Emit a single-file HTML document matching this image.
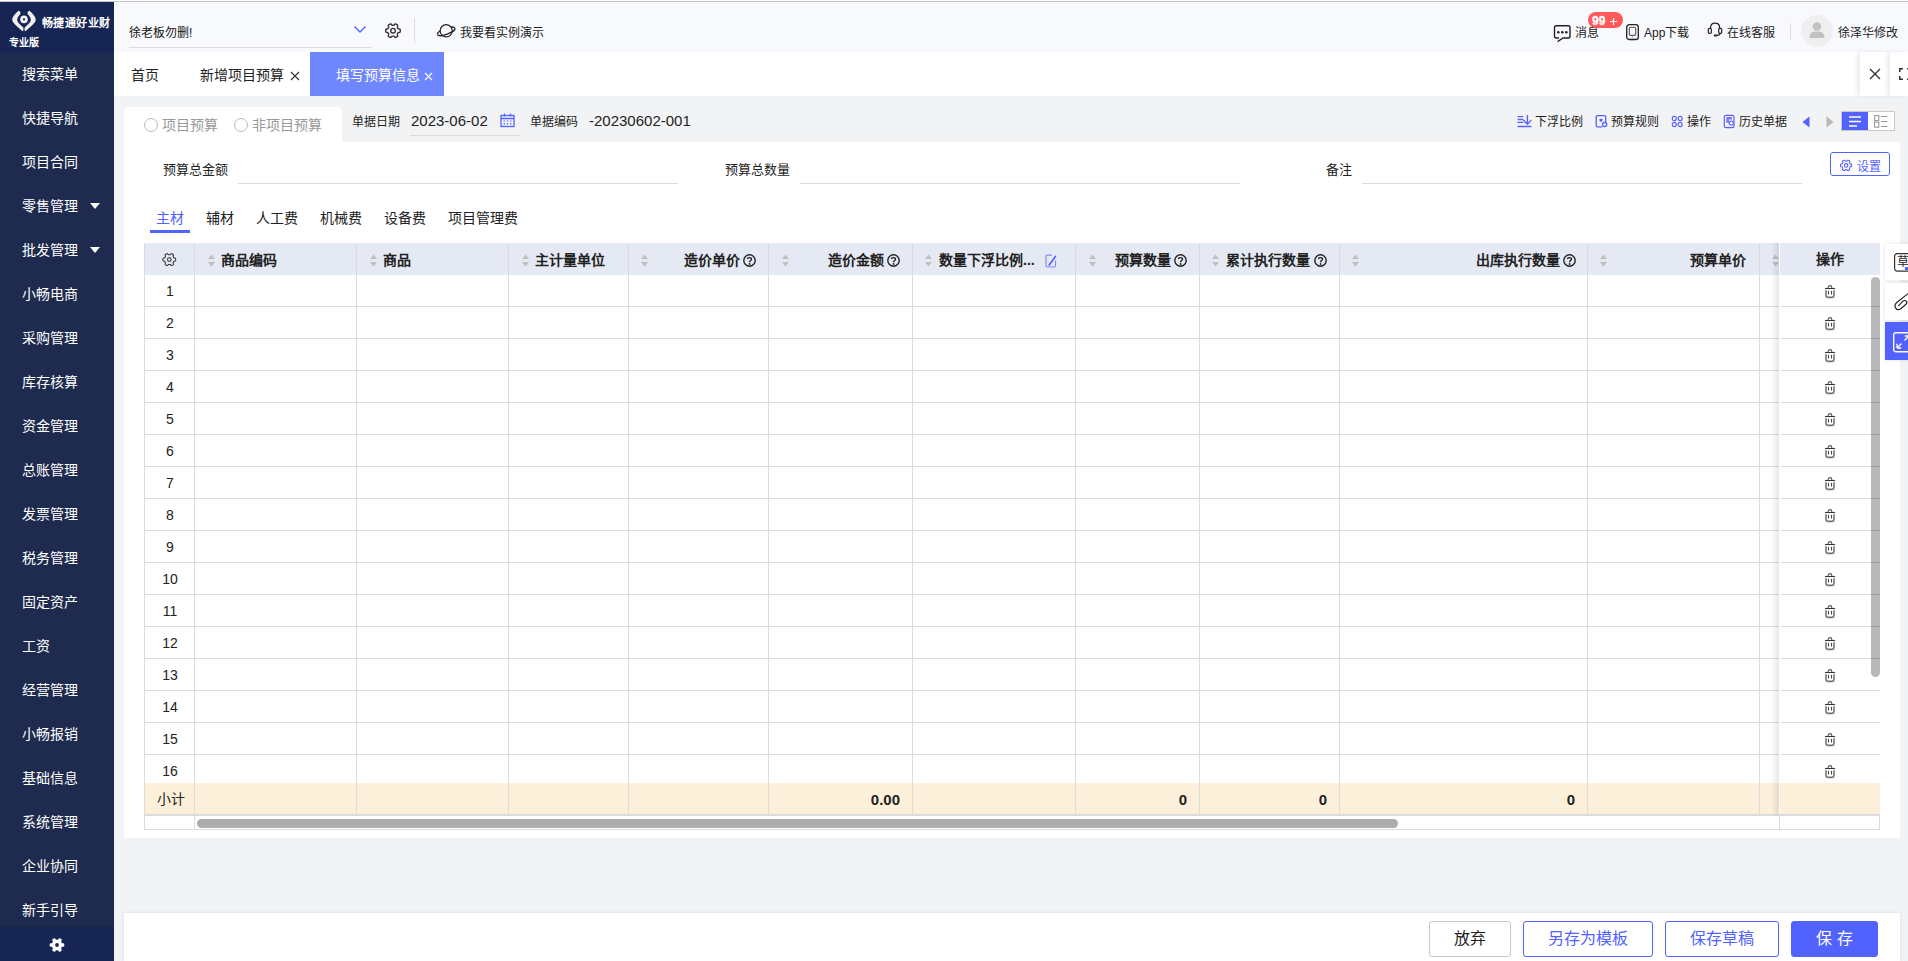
<!DOCTYPE html>
<html lang="zh-CN">
<head>
<meta charset="utf-8">
<style>
*{box-sizing:border-box;margin:0;padding:0}
html,body{width:1908px;height:961px;overflow:hidden}
body{position:relative;background:#f2f3f5;font-family:"Liberation Sans",sans-serif;color:#333;font-size:14px}
.a{position:absolute}
.t{position:absolute;white-space:nowrap;line-height:1}
svg{position:absolute;overflow:visible}
</style>
</head>
<body>
<div class="a" style="left:0px;top:0px;width:1908px;height:1px;background:#fff"></div>
<div class="a" style="left:0px;top:1px;width:1908px;height:1px;background:#c4c4c4"></div>
<div class="a" style="left:0px;top:2px;width:114px;height:959px;background:#1e2b4e"></div>
<div class="a" style="left:0px;top:2px;width:114px;height:50px;background:#162554"></div>
<div class="a" style="left:0px;top:927px;width:114px;height:34px;background:#162554"></div>
<svg style="left:0;top:0" width="60" height="40"><path d="M18.6 10.8 C15.5 13.5 12.3 16.5 12.3 19.8 C12.3 22.5 15 24.8 22.6 31.2 L23.4 30.6 L23.4 27.6 C19.8 24.4 17.2 22.2 17.2 19.8 C17.2 17.6 18.6 16 20.2 14.2 C21 13 20.2 11.2 18.6 10.8 Z" fill="#f0f0f0"/><path d="M29.4 10.8 C32.5 13.5 35.7 16.5 35.7 19.8 C35.7 22.5 33 24.8 25.4 31.2 L24.6 30.6 L24.6 27.6 C28.2 24.4 30.8 22.2 30.8 19.8 C30.8 17.6 29.4 16 27.8 14.2 C27 13 27.8 11.2 29.4 10.8 Z" fill="#f0f0f0"/><circle cx="24" cy="19.4" r="3.8" fill="#f0f0f0"/><circle cx="24" cy="19.4" r="1.1" fill="#162554"/></svg>
<div class="t" style="left:42px;top:16px;font-size:11px;color:#fff;line-height:15px;font-weight:bold;letter-spacing:0.4px">畅捷通好业财</div>
<div class="t" style="left:9px;top:36px;font-size:10px;color:#fff;line-height:14px;font-weight:bold">专业版</div>
<div class="t" style="left:22px;top:65px;font-size:14px;color:#fff;line-height:18px;">搜索菜单</div>
<div class="t" style="left:22px;top:109px;font-size:14px;color:#fff;line-height:18px;">快捷导航</div>
<div class="t" style="left:22px;top:153px;font-size:14px;color:#fff;line-height:18px;">项目合同</div>
<div class="t" style="left:22px;top:197px;font-size:14px;color:#fff;line-height:18px;">零售管理</div>
<div class="a" style="left:90px;top:203px;width:0;height:0;border-left:5px solid transparent;border-right:5px solid transparent;border-top:6px solid #fff"></div>
<div class="t" style="left:22px;top:241px;font-size:14px;color:#fff;line-height:18px;">批发管理</div>
<div class="a" style="left:90px;top:247px;width:0;height:0;border-left:5px solid transparent;border-right:5px solid transparent;border-top:6px solid #fff"></div>
<div class="t" style="left:22px;top:285px;font-size:14px;color:#fff;line-height:18px;">小畅电商</div>
<div class="t" style="left:22px;top:329px;font-size:14px;color:#fff;line-height:18px;">采购管理</div>
<div class="t" style="left:22px;top:373px;font-size:14px;color:#fff;line-height:18px;">库存核算</div>
<div class="t" style="left:22px;top:417px;font-size:14px;color:#fff;line-height:18px;">资金管理</div>
<div class="t" style="left:22px;top:461px;font-size:14px;color:#fff;line-height:18px;">总账管理</div>
<div class="t" style="left:22px;top:505px;font-size:14px;color:#fff;line-height:18px;">发票管理</div>
<div class="t" style="left:22px;top:549px;font-size:14px;color:#fff;line-height:18px;">税务管理</div>
<div class="t" style="left:22px;top:593px;font-size:14px;color:#fff;line-height:18px;">固定资产</div>
<div class="t" style="left:22px;top:637px;font-size:14px;color:#fff;line-height:18px;">工资</div>
<div class="t" style="left:22px;top:681px;font-size:14px;color:#fff;line-height:18px;">经营管理</div>
<div class="t" style="left:22px;top:725px;font-size:14px;color:#fff;line-height:18px;">小畅报销</div>
<div class="t" style="left:22px;top:769px;font-size:14px;color:#fff;line-height:18px;">基础信息</div>
<div class="t" style="left:22px;top:813px;font-size:14px;color:#fff;line-height:18px;">系统管理</div>
<div class="t" style="left:22px;top:857px;font-size:14px;color:#fff;line-height:18px;">企业协同</div>
<div class="t" style="left:22px;top:901px;font-size:14px;color:#fff;line-height:18px;">新手引导</div>
<svg style="left:0;top:0" width="1908" height="961"><path fill="#fff" d="M64.30 945.00 L64.30 945.19 L64.29 945.38 L64.28 945.57 L64.25 945.76 L64.22 945.95 L64.16 946.13 L64.07 946.31 L63.92 946.47 L63.66 946.60 L63.29 946.69 L62.85 946.73 L62.46 946.77 L62.18 946.83 L62.00 946.92 L61.88 947.02 L61.79 947.13 L61.72 947.25 L61.65 947.37 L61.58 947.49 L61.51 947.60 L61.44 947.72 L61.37 947.84 L61.31 947.96 L61.24 948.08 L61.19 948.22 L61.16 948.37 L61.18 948.57 L61.27 948.84 L61.43 949.20 L61.60 949.60 L61.72 949.97 L61.73 950.25 L61.67 950.47 L61.56 950.63 L61.43 950.77 L61.29 950.90 L61.13 951.02 L60.98 951.12 L60.81 951.22 L60.65 951.32 L60.48 951.42 L60.31 951.50 L60.14 951.59 L59.97 951.66 L59.78 951.72 L59.60 951.77 L59.40 951.78 L59.18 951.72 L58.95 951.57 L58.69 951.29 L58.42 950.93 L58.19 950.61 L58.00 950.40 L57.84 950.29 L57.69 950.24 L57.55 950.22 L57.41 950.21 L57.27 950.21 L57.14 950.21 L57.00 950.21 L56.86 950.21 L56.73 950.21 L56.59 950.21 L56.45 950.22 L56.31 950.24 L56.16 950.29 L56.00 950.40 L55.81 950.61 L55.58 950.93 L55.31 951.29 L55.05 951.57 L54.82 951.72 L54.60 951.78 L54.40 951.77 L54.22 951.72 L54.03 951.66 L53.86 951.59 L53.69 951.50 L53.52 951.42 L53.35 951.32 L53.19 951.22 L53.02 951.12 L52.87 951.02 L52.71 950.90 L52.57 950.77 L52.44 950.63 L52.33 950.47 L52.27 950.25 L52.28 949.97 L52.40 949.60 L52.57 949.20 L52.73 948.84 L52.82 948.57 L52.84 948.37 L52.81 948.22 L52.76 948.08 L52.69 947.96 L52.63 947.84 L52.56 947.72 L52.49 947.60 L52.42 947.49 L52.35 947.37 L52.28 947.25 L52.21 947.13 L52.12 947.02 L52.00 946.92 L51.82 946.83 L51.54 946.77 L51.15 946.73 L50.71 946.69 L50.34 946.60 L50.08 946.47 L49.93 946.31 L49.84 946.13 L49.78 945.95 L49.75 945.76 L49.72 945.57 L49.71 945.38 L49.70 945.19 L49.70 945.00 L49.70 944.81 L49.71 944.62 L49.72 944.43 L49.75 944.24 L49.78 944.05 L49.84 943.87 L49.93 943.69 L50.08 943.53 L50.34 943.40 L50.71 943.31 L51.15 943.27 L51.54 943.23 L51.82 943.17 L52.00 943.08 L52.12 942.98 L52.21 942.87 L52.28 942.75 L52.35 942.63 L52.42 942.51 L52.49 942.40 L52.56 942.28 L52.63 942.16 L52.69 942.04 L52.76 941.92 L52.81 941.78 L52.84 941.63 L52.82 941.43 L52.73 941.16 L52.57 940.80 L52.40 940.40 L52.28 940.03 L52.27 939.75 L52.33 939.53 L52.44 939.37 L52.57 939.23 L52.71 939.10 L52.87 938.98 L53.02 938.88 L53.19 938.78 L53.35 938.68 L53.52 938.58 L53.69 938.50 L53.86 938.41 L54.03 938.34 L54.22 938.28 L54.40 938.23 L54.60 938.22 L54.82 938.28 L55.05 938.43 L55.31 938.71 L55.58 939.07 L55.81 939.39 L56.00 939.60 L56.16 939.71 L56.31 939.76 L56.45 939.78 L56.59 939.79 L56.73 939.79 L56.86 939.79 L57.00 939.79 L57.14 939.79 L57.27 939.79 L57.41 939.79 L57.55 939.78 L57.69 939.76 L57.84 939.71 L58.00 939.60 L58.19 939.39 L58.42 939.07 L58.69 938.71 L58.95 938.43 L59.18 938.28 L59.40 938.22 L59.60 938.23 L59.78 938.28 L59.97 938.34 L60.14 938.41 L60.31 938.50 L60.48 938.58 L60.65 938.68 L60.81 938.78 L60.98 938.88 L61.13 938.98 L61.29 939.10 L61.43 939.23 L61.56 939.37 L61.67 939.53 L61.73 939.75 L61.72 940.03 L61.60 940.40 L61.43 940.80 L61.27 941.16 L61.18 941.43 L61.16 941.63 L61.19 941.78 L61.24 941.92 L61.31 942.04 L61.37 942.16 L61.44 942.28 L61.51 942.40 L61.58 942.51 L61.65 942.63 L61.72 942.75 L61.79 942.87 L61.88 942.98 L62.00 943.08 L62.18 943.17 L62.46 943.23 L62.85 943.27 L63.29 943.31 L63.66 943.40 L63.92 943.53 L64.07 943.69 L64.16 943.87 L64.22 944.05 L64.25 944.24 L64.28 944.43 L64.29 944.62 L64.30 944.81Z"/><circle cx="57" cy="945" r="1.9" fill="#162554"/></svg>
<div class="a" style="left:114px;top:2px;width:1794px;height:50px;background:#f7f9fc"></div>
<div class="a" style="left:114px;top:2px;width:1px;height:50px;background:#fff"></div>
<div class="t" style="left:129px;top:25px;font-size:12px;color:#111;line-height:16px;">徐老板勿删!</div>
<div class="a" style="left:129px;top:47px;width:243px;height:1px;background:#dcdcdc"></div>
<svg style="left:354px;top:26px" width="12" height="7" viewBox="0 0 12 7"><path d="M0.5 0.5 L6 6 L11.5 0.5" fill="none" stroke="#5262ff" stroke-width="1.4"/></svg>
<svg style="left:0;top:0" width="1908" height="961"><path fill="none" stroke="#333" stroke-width="1.4" d="M400.30 30.70 L400.30 30.89 L400.29 31.08 L400.28 31.27 L400.25 31.46 L400.22 31.65 L400.16 31.83 L400.08 32.01 L399.94 32.17 L399.70 32.31 L399.36 32.40 L398.96 32.47 L398.60 32.52 L398.34 32.59 L398.17 32.69 L398.06 32.80 L397.97 32.91 L397.90 33.03 L397.82 33.16 L397.75 33.28 L397.68 33.40 L397.61 33.53 L397.54 33.65 L397.47 33.77 L397.40 33.90 L397.34 34.03 L397.31 34.19 L397.31 34.38 L397.38 34.64 L397.51 34.98 L397.66 35.36 L397.75 35.70 L397.75 35.97 L397.68 36.17 L397.56 36.34 L397.43 36.48 L397.29 36.60 L397.13 36.72 L396.98 36.82 L396.81 36.92 L396.65 37.02 L396.48 37.12 L396.31 37.20 L396.14 37.29 L395.97 37.36 L395.79 37.43 L395.60 37.47 L395.40 37.49 L395.19 37.45 L394.96 37.31 L394.70 37.06 L394.45 36.74 L394.22 36.46 L394.03 36.27 L393.87 36.17 L393.71 36.13 L393.57 36.11 L393.43 36.11 L393.28 36.11 L393.14 36.11 L393.00 36.11 L392.86 36.11 L392.72 36.11 L392.57 36.11 L392.43 36.11 L392.29 36.13 L392.13 36.17 L391.97 36.27 L391.78 36.46 L391.55 36.74 L391.30 37.06 L391.04 37.31 L390.81 37.45 L390.60 37.49 L390.40 37.47 L390.21 37.43 L390.03 37.36 L389.86 37.29 L389.69 37.20 L389.52 37.12 L389.35 37.02 L389.19 36.92 L389.02 36.82 L388.87 36.72 L388.71 36.60 L388.57 36.48 L388.44 36.34 L388.32 36.17 L388.25 35.97 L388.25 35.70 L388.34 35.36 L388.49 34.98 L388.62 34.64 L388.69 34.38 L388.69 34.19 L388.66 34.03 L388.60 33.90 L388.53 33.77 L388.46 33.65 L388.39 33.53 L388.32 33.40 L388.25 33.28 L388.18 33.16 L388.10 33.03 L388.03 32.91 L387.94 32.80 L387.83 32.69 L387.66 32.59 L387.40 32.52 L387.04 32.47 L386.64 32.40 L386.30 32.31 L386.06 32.17 L385.92 32.01 L385.84 31.83 L385.78 31.65 L385.75 31.46 L385.72 31.27 L385.71 31.08 L385.70 30.89 L385.70 30.70 L385.70 30.51 L385.71 30.32 L385.72 30.13 L385.75 29.94 L385.78 29.75 L385.84 29.57 L385.92 29.39 L386.06 29.23 L386.30 29.09 L386.64 29.00 L387.04 28.93 L387.40 28.88 L387.66 28.81 L387.83 28.71 L387.94 28.60 L388.03 28.49 L388.10 28.37 L388.18 28.24 L388.25 28.12 L388.32 28.00 L388.39 27.87 L388.46 27.75 L388.53 27.63 L388.60 27.50 L388.66 27.37 L388.69 27.21 L388.69 27.02 L388.62 26.76 L388.49 26.42 L388.34 26.04 L388.25 25.70 L388.25 25.43 L388.32 25.23 L388.44 25.06 L388.57 24.92 L388.71 24.80 L388.87 24.68 L389.02 24.58 L389.19 24.48 L389.35 24.38 L389.52 24.28 L389.69 24.20 L389.86 24.11 L390.03 24.04 L390.21 23.97 L390.40 23.93 L390.60 23.91 L390.81 23.95 L391.04 24.09 L391.30 24.34 L391.55 24.66 L391.78 24.94 L391.97 25.13 L392.13 25.23 L392.29 25.27 L392.43 25.29 L392.57 25.29 L392.72 25.29 L392.86 25.29 L393.00 25.29 L393.14 25.29 L393.28 25.29 L393.43 25.29 L393.57 25.29 L393.71 25.27 L393.87 25.23 L394.03 25.13 L394.22 24.94 L394.45 24.66 L394.70 24.34 L394.96 24.09 L395.19 23.95 L395.40 23.91 L395.60 23.93 L395.79 23.97 L395.97 24.04 L396.14 24.11 L396.31 24.20 L396.48 24.28 L396.65 24.38 L396.81 24.48 L396.98 24.58 L397.13 24.68 L397.29 24.80 L397.43 24.92 L397.56 25.06 L397.68 25.23 L397.75 25.43 L397.75 25.70 L397.66 26.04 L397.51 26.42 L397.38 26.76 L397.31 27.02 L397.31 27.21 L397.34 27.37 L397.40 27.50 L397.47 27.63 L397.54 27.75 L397.61 27.87 L397.68 28.00 L397.75 28.12 L397.82 28.24 L397.90 28.37 L397.97 28.49 L398.06 28.60 L398.17 28.71 L398.34 28.81 L398.60 28.88 L398.96 28.93 L399.36 29.00 L399.70 29.09 L399.94 29.23 L400.08 29.39 L400.16 29.57 L400.22 29.75 L400.25 29.94 L400.28 30.13 L400.29 30.32 L400.30 30.51Z"/><circle cx="393" cy="30.7" r="2.3" fill="none" stroke="#333" stroke-width="1.4"/></svg>
<div class="a" style="left:414px;top:18px;width:1px;height:25px;background:#dcdcdc"></div>
<svg style="left:430px;top:18px" width="30" height="26"><g transform="translate(16.2 13.3) rotate(-20)"><path d="M-9.3 0 A9.3 3 0 0 1 9.3 0" fill="none" stroke="#222" stroke-width="1.2"/></g><circle cx="16.2" cy="12.8" r="6.1" fill="#f7f9fc" stroke="#222" stroke-width="1.2"/><g transform="translate(16.2 13.3) rotate(-20)"><path d="M-9.3 0 A9.3 3 0 0 0 9.3 0" fill="none" stroke="#222" stroke-width="1.2"/></g></svg>
<div class="t" style="left:460px;top:25px;font-size:12px;color:#222;line-height:16px;">我要看实例演示</div>
<svg style="left:1553px;top:24px" width="19" height="19" viewBox="0 0 19 19"><path d="M6 14 H3.3 Q1.5 14 1.5 12.2 V3.6 Q1.5 1.8 3.3 1.8 H15.2 Q17 1.8 17 3.6 V12.2 Q17 14 15.2 14 H10 L4.6 17.6" fill="none" stroke="#222" stroke-width="1.4" stroke-linejoin="round"/><circle cx="5.3" cy="8.3" r="1.3" fill="#222"/><circle cx="9.3" cy="8.3" r="1.3" fill="#222"/><circle cx="13.3" cy="8.3" r="1.3" fill="#222"/></svg>
<div class="t" style="left:1575px;top:25px;font-size:12px;color:#222;line-height:16px;">消息</div>
<div class="a" style="left:1588px;top:12px;width:35px;height:16px;border-radius:8px;background:#ff5959"></div>
<div class="t" style="left:1592px;top:13px;font-size:12px;color:#fff;line-height:16px;font-weight:bold;line-height:17px;-webkit-text-stroke:0.3px #fff">99</div>
<svg style="left:1610px;top:18px" width="7" height="7" viewBox="0 0 7 7"><path d="M0 3.5 H7 M3.5 0 V7" stroke="#fff" stroke-width="1.2"/></svg>
<svg style="left:1626px;top:24px" width="13" height="16" viewBox="0 0 13 16"><rect x="0.7" y="0.7" width="11.6" height="14.8" rx="2.6" fill="none" stroke="#222" stroke-width="1.3"/><rect x="3.3" y="3.2" width="6.4" height="8.2" rx="1.3" fill="none" stroke="#555" stroke-width="1.1"/><path d="M6.5 11.6 V13.6" stroke="#aaa" stroke-width="1.3"/></svg>
<div class="t" style="left:1644px;top:25px;font-size:12px;color:#222;line-height:16px;">App下载</div>
<svg style="left:1707px;top:22px" width="16" height="16" viewBox="0 0 16 16"><path d="M3.6 6.3 V5.6 Q3.6 1.2 8.1 1.2 Q12.6 1.2 12.6 5.6 V6.3" fill="none" stroke="#222" stroke-width="1.2"/><rect x="1.3" y="6.3" width="3" height="5" rx="1" fill="none" stroke="#222" stroke-width="1.2"/><rect x="11.7" y="6.3" width="3" height="5" rx="1" fill="none" stroke="#222" stroke-width="1.2"/><path d="M13 11.3 Q13 13.4 10 13.4" fill="none" stroke="#222" stroke-width="1.2"/><rect x="6.8" y="12.5" width="3.4" height="1.9" rx="0.9" fill="#222"/></svg>
<div class="t" style="left:1727px;top:25px;font-size:12px;color:#222;line-height:16px;">在线客服</div>
<div class="a" style="left:1790px;top:23px;width:1px;height:16px;background:#dcdcdc"></div>
<div class="a" style="left:1801px;top:15px;width:32px;height:32px;border-radius:50%;background:#efefef"></div>
<svg style="left:1809px;top:21px" width="16" height="18" viewBox="0 0 16 18"><circle cx="8" cy="5.5" r="4.2" fill="#c2c2c2"/><path d="M0.5 17 C0.5 11.5 3.5 10.5 8 10.5 C12.5 10.5 15.5 11.5 15.5 17 Z" fill="#c2c2c2"/></svg>
<div class="t" style="left:1838px;top:25px;font-size:12px;color:#222;line-height:16px;">徐泽华修改</div>
<div class="a" style="left:114px;top:52px;width:1794px;height:44px;background:#fff"></div>
<div class="t" style="left:131px;top:66px;font-size:14px;color:#222;line-height:18px;">首页</div>
<div class="t" style="left:200px;top:66px;font-size:14px;color:#222;line-height:18px;">新增项目预算</div>
<svg style="left:290px;top:71px" width="10" height="10" viewBox="0 0 10 10"><path d="M1 1 L9 9 M9 1 L1 9" stroke="#333" stroke-width="1.1"/></svg>
<div class="a" style="left:310px;top:52px;width:134px;height:44px;background:#6e87fc"></div>
<div class="t" style="left:336px;top:66px;font-size:14px;color:#fff;line-height:18px;">填写预算信息</div>
<svg style="left:424px;top:72px" width="9" height="9" viewBox="0 0 9 9"><path d="M1 1 L8 8 M8 1 L1 8" stroke="#fff" stroke-width="1.1"/></svg>
<div class="a" style="left:1860px;top:52px;width:30px;height:44px;background:#fff;box-shadow:-3px 0 4px rgba(0,0,0,0.08)"></div>
<svg style="left:1869px;top:68px" width="12" height="12" viewBox="0 0 12 12"><path d="M1 1 L11 11 M11 1 L1 11" stroke="#333" stroke-width="1.4"/></svg>
<div class="a" style="left:1890px;top:52px;width:18px;height:44px;background:#fff;box-shadow:-3px 0 4px rgba(0,0,0,0.08)"></div>
<svg style="left:1899px;top:68px" width="12" height="12" viewBox="0 0 12 12"><path d="M0.75 4 V0.75 H4 M8 0.75 H11.25 V4 M11.25 8 V11.25 H8 M4 11.25 H0.75 V8" fill="none" stroke="#333" stroke-width="1.5"/></svg>
<div class="a" style="left:124px;top:107px;width:218px;height:40px;background:#fff;border-radius:5px 5px 0 0"></div>
<div class="a" style="left:144px;top:118px;width:14px;height:14px;border-radius:50%;border:1px solid #bbb;background:#fff"></div>
<div class="t" style="left:162px;top:116px;font-size:14px;color:#999;line-height:18px;">项目预算</div>
<div class="a" style="left:234px;top:118px;width:14px;height:14px;border-radius:50%;border:1px solid #bbb;background:#fff"></div>
<div class="t" style="left:252px;top:116px;font-size:14px;color:#999;line-height:18px;">非项目预算</div>
<div class="t" style="left:352px;top:114px;font-size:12px;color:#222;line-height:16px;">单据日期</div>
<div class="t" style="left:411px;top:111px;font-size:15px;color:#222;line-height:19px;">2023-06-02</div>
<div class="a" style="left:410px;top:135px;width:110px;height:1px;background:#dcdcdc"></div>
<svg style="left:500px;top:113px" width="15" height="14" viewBox="0 0 15 14"><rect x="1" y="2.5" width="13" height="11" fill="none" stroke="#5262ff" stroke-width="1.3"/><path d="M1 5.5 H14 M4.5 0.5 V3.5 M10.5 0.5 V3.5" stroke="#5262ff" stroke-width="1.3"/><path d="M3.5 8 H5 M6.8 8 H8.3 M10 8 H11.5 M3.5 10.8 H5 M6.8 10.8 H8.3 M10 10.8 H11.5" stroke="#5262ff" stroke-width="1.2"/></svg>
<div class="t" style="left:530px;top:114px;font-size:12px;color:#222;line-height:16px;">单据编码</div>
<div class="t" style="left:589px;top:111px;font-size:15px;color:#222;line-height:19px;">-20230602-001</div>
<svg style="left:1516px;top:114px" width="16" height="14" viewBox="0 0 16 14"><path d="M2.1 2.6 H6.8 M2.1 5.5 H6.8 M2.1 8.4 H6.8" stroke="#5a60fb" stroke-width="1.3" stroke-linecap="round"/><path d="M11.4 1.5 V10.2 M7.8 6.6 L11.4 10.3 L14.8 6.6" fill="none" stroke="#5a60fb" stroke-width="1.4" stroke-linecap="round" stroke-linejoin="round"/><path d="M2.1 12.6 H14.9" stroke="#5a60fb" stroke-width="1.5" stroke-linecap="round"/></svg>
<div class="t" style="left:1535px;top:114px;font-size:12px;color:#222;line-height:16px;">下浮比例</div>
<svg style="left:1595px;top:114px" width="14" height="15" viewBox="0 0 14 15"><path d="M7.2 12.9 H2.6 Q1.2 12.9 1.2 11.5 V2.9 Q1.2 1.6 2.6 1.6 H9.3 Q10.7 1.6 10.7 2.9 V8.6" fill="none" stroke="#5a60fb" stroke-width="1.3"/><path d="M4 5.7 L6 4.4 L8 5.7 L6 8.2 Z" fill="#5a60fb"/><circle cx="9.6" cy="10.6" r="2.1" fill="#f2f3f5" stroke="#5a60fb" stroke-width="1.3"/></svg>
<div class="t" style="left:1611px;top:114px;font-size:12px;color:#222;line-height:16px;">预算规则</div>
<svg style="left:1671px;top:115px" width="13" height="13" viewBox="0 0 13 13"><rect x="1.3" y="1.4" width="3.9" height="4.3" rx="1.9" fill="none" stroke="#5a60fb" stroke-width="1.2"/><rect x="7.2" y="1.4" width="3.9" height="4.3" rx="1.9" fill="none" stroke="#5a60fb" stroke-width="1.2"/><rect x="1.3" y="7.4" width="3.9" height="4.3" rx="1.9" fill="none" stroke="#5a60fb" stroke-width="1.2"/><rect x="7.2" y="7.4" width="3.9" height="4.3" rx="1.9" fill="none" stroke="#5a60fb" stroke-width="1.2"/></svg>
<div class="t" style="left:1687px;top:114px;font-size:12px;color:#222;line-height:16px;">操作</div>
<svg style="left:1723px;top:114px" width="13" height="15" viewBox="0 0 13 15"><rect x="1.3" y="1.3" width="9.7" height="12.3" rx="1.6" fill="none" stroke="#5a60fb" stroke-width="1.2"/><path d="M3.3 3.1 H9 V5.6 H6 V8.7 H3.3 Z" fill="#7c79fb"/><circle cx="8.3" cy="9.1" r="2.1" fill="#f2f3f5" stroke="#5a60fb" stroke-width="1.1"/></svg>
<div class="t" style="left:1739px;top:114px;font-size:12px;color:#222;line-height:16px;">历史单据</div>
<svg style="left:1802px;top:116px" width="8" height="12" viewBox="0 0 8 12"><path d="M7.5 0.5 V11.5 L0.5 6 Z" fill="#5262ff"/></svg>
<svg style="left:1826px;top:116px" width="8" height="12" viewBox="0 0 8 12"><path d="M0.5 0.5 V11.5 L7.5 6 Z" fill="#b8b8b8"/></svg>
<div class="a" style="left:1841px;top:111px;width:54px;height:20px;background:#fff;border:1px solid #c8c8c8"></div>
<div class="a" style="left:1842px;top:112px;width:26px;height:18px;background:#5262ff"></div>
<svg style="left:1848px;top:115px" width="14" height="13" viewBox="0 0 14 13"><path d="M1 2 H13 M1 6.5 H13 M1 11 H9" stroke="#fff" stroke-width="1.4"/></svg>
<svg style="left:1874px;top:115px" width="14" height="13" viewBox="0 0 14 13"><rect x="0.6" y="0.6" width="4.2" height="5" fill="none" stroke="#999" stroke-width="1.1"/><rect x="0.6" y="7.2" width="4.2" height="5" fill="none" stroke="#999" stroke-width="1.1"/><path d="M7 1.5 H13.5 M7 6.5 H13.5 M7 11.5 H13.5" stroke="#999" stroke-width="1.2"/></svg>
<div class="a" style="left:124px;top:142px;width:1776px;height:696px;background:#fff"></div>
<div class="t" style="left:163px;top:161px;font-size:13px;color:#222;line-height:17px;">预算总金额</div>
<div class="a" style="left:238px;top:183px;width:440px;height:1px;background:#dcdcdc"></div>
<div class="t" style="left:725px;top:161px;font-size:13px;color:#222;line-height:17px;">预算总数量</div>
<div class="a" style="left:800px;top:183px;width:440px;height:1px;background:#dcdcdc"></div>
<div class="t" style="left:1326px;top:161px;font-size:13px;color:#222;line-height:17px;">备注</div>
<div class="a" style="left:1362px;top:183px;width:440px;height:1px;background:#dcdcdc"></div>
<div class="a" style="left:1830px;top:152px;width:60px;height:24px;border:1px solid #5262ff;border-radius:3px;background:#fff"></div>
<svg style="left:0;top:0" width="1908" height="961"><path fill="none" stroke="#5262ff" stroke-width="1.1" d="M1851.70 165.40 L1851.70 165.55 L1851.69 165.69 L1851.68 165.84 L1851.66 165.98 L1851.64 166.13 L1851.60 166.27 L1851.53 166.41 L1851.43 166.53 L1851.25 166.64 L1851.00 166.71 L1850.70 166.76 L1850.44 166.81 L1850.24 166.87 L1850.12 166.94 L1850.03 167.03 L1849.96 167.12 L1849.91 167.22 L1849.85 167.31 L1849.80 167.41 L1849.74 167.50 L1849.69 167.60 L1849.63 167.69 L1849.58 167.79 L1849.52 167.89 L1849.48 167.99 L1849.45 168.11 L1849.44 168.26 L1849.49 168.45 L1849.58 168.70 L1849.69 168.99 L1849.75 169.25 L1849.74 169.45 L1849.69 169.60 L1849.60 169.73 L1849.50 169.83 L1849.39 169.93 L1849.27 170.01 L1849.15 170.10 L1849.03 170.17 L1848.90 170.25 L1848.77 170.32 L1848.64 170.39 L1848.51 170.45 L1848.38 170.51 L1848.24 170.56 L1848.09 170.60 L1847.94 170.61 L1847.78 170.58 L1847.61 170.48 L1847.41 170.30 L1847.22 170.07 L1847.05 169.86 L1846.90 169.72 L1846.77 169.65 L1846.66 169.62 L1846.54 169.61 L1846.43 169.60 L1846.32 169.60 L1846.21 169.61 L1846.10 169.61 L1845.99 169.61 L1845.88 169.60 L1845.77 169.60 L1845.66 169.61 L1845.54 169.62 L1845.43 169.65 L1845.30 169.72 L1845.15 169.86 L1844.98 170.07 L1844.79 170.30 L1844.59 170.48 L1844.42 170.58 L1844.26 170.61 L1844.11 170.60 L1843.96 170.56 L1843.82 170.51 L1843.69 170.45 L1843.56 170.39 L1843.43 170.32 L1843.30 170.25 L1843.17 170.17 L1843.05 170.10 L1842.93 170.01 L1842.81 169.93 L1842.70 169.83 L1842.60 169.73 L1842.51 169.60 L1842.46 169.45 L1842.45 169.25 L1842.51 168.99 L1842.62 168.70 L1842.71 168.45 L1842.76 168.26 L1842.75 168.11 L1842.72 167.99 L1842.68 167.89 L1842.62 167.79 L1842.57 167.69 L1842.51 167.60 L1842.46 167.50 L1842.40 167.41 L1842.35 167.31 L1842.29 167.22 L1842.24 167.12 L1842.17 167.03 L1842.08 166.94 L1841.96 166.87 L1841.76 166.81 L1841.50 166.76 L1841.20 166.71 L1840.95 166.64 L1840.77 166.53 L1840.67 166.41 L1840.60 166.27 L1840.56 166.13 L1840.54 165.98 L1840.52 165.84 L1840.51 165.69 L1840.50 165.55 L1840.50 165.40 L1840.50 165.25 L1840.51 165.11 L1840.52 164.96 L1840.54 164.82 L1840.56 164.67 L1840.60 164.53 L1840.67 164.39 L1840.77 164.27 L1840.95 164.16 L1841.20 164.09 L1841.50 164.04 L1841.76 163.99 L1841.96 163.93 L1842.08 163.86 L1842.17 163.77 L1842.24 163.68 L1842.29 163.58 L1842.35 163.49 L1842.40 163.39 L1842.46 163.30 L1842.51 163.20 L1842.57 163.11 L1842.62 163.01 L1842.68 162.91 L1842.72 162.81 L1842.75 162.69 L1842.76 162.54 L1842.71 162.35 L1842.62 162.10 L1842.51 161.81 L1842.45 161.55 L1842.46 161.35 L1842.51 161.20 L1842.60 161.07 L1842.70 160.97 L1842.81 160.87 L1842.93 160.79 L1843.05 160.70 L1843.17 160.63 L1843.30 160.55 L1843.43 160.48 L1843.56 160.41 L1843.69 160.35 L1843.82 160.29 L1843.96 160.24 L1844.11 160.20 L1844.26 160.19 L1844.42 160.22 L1844.59 160.32 L1844.79 160.50 L1844.98 160.73 L1845.15 160.94 L1845.30 161.08 L1845.43 161.15 L1845.54 161.18 L1845.66 161.19 L1845.77 161.20 L1845.88 161.20 L1845.99 161.19 L1846.10 161.19 L1846.21 161.19 L1846.32 161.20 L1846.43 161.20 L1846.54 161.19 L1846.66 161.18 L1846.77 161.15 L1846.90 161.08 L1847.05 160.94 L1847.22 160.73 L1847.41 160.50 L1847.61 160.32 L1847.78 160.22 L1847.94 160.19 L1848.09 160.20 L1848.24 160.24 L1848.38 160.29 L1848.51 160.35 L1848.64 160.41 L1848.77 160.48 L1848.90 160.55 L1849.03 160.63 L1849.15 160.70 L1849.27 160.79 L1849.39 160.87 L1849.50 160.97 L1849.60 161.07 L1849.69 161.20 L1849.74 161.35 L1849.75 161.55 L1849.69 161.81 L1849.58 162.10 L1849.49 162.35 L1849.44 162.54 L1849.45 162.69 L1849.48 162.81 L1849.52 162.91 L1849.58 163.01 L1849.63 163.11 L1849.69 163.20 L1849.74 163.30 L1849.80 163.39 L1849.85 163.49 L1849.91 163.58 L1849.96 163.68 L1850.03 163.77 L1850.12 163.86 L1850.24 163.93 L1850.44 163.99 L1850.70 164.04 L1851.00 164.09 L1851.25 164.16 L1851.43 164.27 L1851.53 164.39 L1851.60 164.53 L1851.64 164.67 L1851.66 164.82 L1851.68 164.96 L1851.69 165.11 L1851.70 165.25Z"/><circle cx="1846.1" cy="165.4" r="1.8" fill="none" stroke="#5262ff" stroke-width="1.1"/></svg>
<div class="t" style="left:1857px;top:159px;font-size:12px;color:#5262ff;line-height:16px;">设置</div>
<div class="t" style="left:156px;top:209px;font-size:14px;color:#5262ff;line-height:18px;">主材</div>
<div class="t" style="left:206px;top:209px;font-size:14px;color:#222;line-height:18px;">辅材</div>
<div class="t" style="left:256px;top:209px;font-size:14px;color:#222;line-height:18px;">人工费</div>
<div class="t" style="left:320px;top:209px;font-size:14px;color:#222;line-height:18px;">机械费</div>
<div class="t" style="left:384px;top:209px;font-size:14px;color:#222;line-height:18px;">设备费</div>
<div class="t" style="left:448px;top:209px;font-size:14px;color:#222;line-height:18px;">项目管理费</div>
<div class="a" style="left:150px;top:230px;width:40px;height:3px;background:#5262ff"></div>
<div class="a" style="left:144px;top:243px;width:1736px;height:32px;background:#e5e9f3"></div>
<div class="a" style="left:144px;top:783px;width:1736px;height:31px;background:#fcf0db"></div>
<div class="a" style="left:144px;top:814px;width:1736px;height:2px;background:#dcdcdc"></div>
<div class="a" style="left:144px;top:306px;width:1736px;height:1px;background:#dcdcdc"></div>
<div class="a" style="left:144px;top:338px;width:1736px;height:1px;background:#dcdcdc"></div>
<div class="a" style="left:144px;top:370px;width:1736px;height:1px;background:#dcdcdc"></div>
<div class="a" style="left:144px;top:402px;width:1736px;height:1px;background:#dcdcdc"></div>
<div class="a" style="left:144px;top:434px;width:1736px;height:1px;background:#dcdcdc"></div>
<div class="a" style="left:144px;top:466px;width:1736px;height:1px;background:#dcdcdc"></div>
<div class="a" style="left:144px;top:498px;width:1736px;height:1px;background:#dcdcdc"></div>
<div class="a" style="left:144px;top:530px;width:1736px;height:1px;background:#dcdcdc"></div>
<div class="a" style="left:144px;top:562px;width:1736px;height:1px;background:#dcdcdc"></div>
<div class="a" style="left:144px;top:594px;width:1736px;height:1px;background:#dcdcdc"></div>
<div class="a" style="left:144px;top:626px;width:1736px;height:1px;background:#dcdcdc"></div>
<div class="a" style="left:144px;top:658px;width:1736px;height:1px;background:#dcdcdc"></div>
<div class="a" style="left:144px;top:690px;width:1736px;height:1px;background:#dcdcdc"></div>
<div class="a" style="left:144px;top:722px;width:1736px;height:1px;background:#dcdcdc"></div>
<div class="a" style="left:144px;top:754px;width:1736px;height:1px;background:#dcdcdc"></div>
<div class="a" style="left:144px;top:243px;width:1px;height:586px;background:#dcdcdc"></div>
<div class="a" style="left:194px;top:243px;width:1px;height:572px;background:#dcdcdc"></div>
<div class="a" style="left:356px;top:243px;width:1px;height:572px;background:#dcdcdc"></div>
<div class="a" style="left:508px;top:243px;width:1px;height:572px;background:#dcdcdc"></div>
<div class="a" style="left:628px;top:243px;width:1px;height:572px;background:#dcdcdc"></div>
<div class="a" style="left:768px;top:243px;width:1px;height:572px;background:#dcdcdc"></div>
<div class="a" style="left:912px;top:243px;width:1px;height:572px;background:#dcdcdc"></div>
<div class="a" style="left:1075px;top:243px;width:1px;height:572px;background:#dcdcdc"></div>
<div class="a" style="left:1199px;top:243px;width:1px;height:572px;background:#dcdcdc"></div>
<div class="a" style="left:1339px;top:243px;width:1px;height:572px;background:#dcdcdc"></div>
<div class="a" style="left:1587px;top:243px;width:1px;height:572px;background:#dcdcdc"></div>
<div class="a" style="left:1759px;top:243px;width:1px;height:572px;background:#dcdcdc"></div>
<div class="a" style="left:144px;top:829px;width:1736px;height:1px;background:#dcdcdc"></div>
<div class="a" style="left:194px;top:815px;width:1px;height:14px;background:#dcdcdc"></div>
<div class="a" style="left:197px;top:819px;width:1201px;height:9px;border-radius:5px;background:#adadad"></div>
<svg style="left:0;top:0" width="1908" height="961"><path fill="none" stroke="#333" stroke-width="1.05" d="M175.70 259.60 L175.70 259.77 L175.69 259.93 L175.68 260.10 L175.66 260.27 L175.63 260.43 L175.58 260.59 L175.51 260.75 L175.39 260.89 L175.19 261.01 L174.90 261.10 L174.56 261.16 L174.26 261.21 L174.04 261.28 L173.89 261.36 L173.79 261.46 L173.72 261.57 L173.65 261.67 L173.59 261.78 L173.53 261.89 L173.46 262.00 L173.40 262.11 L173.34 262.22 L173.27 262.33 L173.21 262.44 L173.16 262.56 L173.12 262.70 L173.12 262.86 L173.17 263.09 L173.28 263.38 L173.40 263.70 L173.47 263.99 L173.47 264.23 L173.40 264.40 L173.30 264.54 L173.19 264.66 L173.06 264.77 L172.92 264.87 L172.79 264.97 L172.64 265.06 L172.50 265.14 L172.35 265.22 L172.21 265.30 L172.06 265.38 L171.90 265.44 L171.74 265.50 L171.58 265.54 L171.41 265.55 L171.22 265.52 L171.02 265.41 L170.80 265.20 L170.58 264.93 L170.38 264.70 L170.22 264.54 L170.07 264.46 L169.93 264.42 L169.81 264.41 L169.68 264.40 L169.55 264.41 L169.43 264.41 L169.30 264.41 L169.17 264.41 L169.05 264.41 L168.92 264.40 L168.79 264.41 L168.67 264.42 L168.53 264.46 L168.38 264.54 L168.22 264.70 L168.02 264.93 L167.80 265.20 L167.58 265.41 L167.38 265.52 L167.19 265.55 L167.02 265.54 L166.86 265.50 L166.70 265.44 L166.54 265.38 L166.39 265.30 L166.25 265.22 L166.10 265.14 L165.96 265.06 L165.81 264.97 L165.68 264.87 L165.54 264.77 L165.41 264.66 L165.30 264.54 L165.20 264.40 L165.13 264.23 L165.13 263.99 L165.20 263.70 L165.32 263.38 L165.43 263.09 L165.48 262.86 L165.48 262.70 L165.44 262.56 L165.39 262.44 L165.33 262.33 L165.26 262.22 L165.20 262.11 L165.14 262.00 L165.07 261.89 L165.01 261.78 L164.95 261.67 L164.88 261.57 L164.81 261.46 L164.71 261.36 L164.56 261.28 L164.34 261.21 L164.04 261.16 L163.70 261.10 L163.41 261.01 L163.21 260.89 L163.09 260.75 L163.02 260.59 L162.97 260.43 L162.94 260.27 L162.92 260.10 L162.91 259.93 L162.90 259.77 L162.90 259.60 L162.90 259.43 L162.91 259.27 L162.92 259.10 L162.94 258.93 L162.97 258.77 L163.02 258.61 L163.09 258.45 L163.21 258.31 L163.41 258.19 L163.70 258.10 L164.04 258.04 L164.34 257.99 L164.56 257.92 L164.71 257.84 L164.81 257.74 L164.88 257.63 L164.95 257.53 L165.01 257.42 L165.07 257.31 L165.14 257.20 L165.20 257.09 L165.26 256.98 L165.33 256.87 L165.39 256.76 L165.44 256.64 L165.48 256.50 L165.48 256.34 L165.43 256.11 L165.32 255.82 L165.20 255.50 L165.13 255.21 L165.13 254.97 L165.20 254.80 L165.30 254.66 L165.41 254.54 L165.54 254.43 L165.68 254.33 L165.81 254.23 L165.96 254.14 L166.10 254.06 L166.25 253.98 L166.39 253.90 L166.54 253.82 L166.70 253.76 L166.86 253.70 L167.02 253.66 L167.19 253.65 L167.38 253.68 L167.58 253.79 L167.80 254.00 L168.02 254.27 L168.22 254.50 L168.38 254.66 L168.53 254.74 L168.67 254.78 L168.79 254.79 L168.92 254.80 L169.05 254.79 L169.17 254.79 L169.30 254.79 L169.43 254.79 L169.55 254.79 L169.68 254.80 L169.81 254.79 L169.93 254.78 L170.07 254.74 L170.22 254.66 L170.38 254.50 L170.58 254.27 L170.80 254.00 L171.02 253.79 L171.22 253.68 L171.41 253.65 L171.58 253.66 L171.74 253.70 L171.90 253.76 L172.06 253.82 L172.21 253.90 L172.35 253.98 L172.50 254.06 L172.64 254.14 L172.79 254.23 L172.92 254.33 L173.06 254.43 L173.19 254.54 L173.30 254.66 L173.40 254.80 L173.47 254.97 L173.47 255.21 L173.40 255.50 L173.28 255.82 L173.17 256.11 L173.12 256.34 L173.12 256.50 L173.16 256.64 L173.21 256.76 L173.27 256.87 L173.34 256.98 L173.40 257.09 L173.46 257.20 L173.53 257.31 L173.59 257.42 L173.65 257.53 L173.72 257.63 L173.79 257.74 L173.89 257.84 L174.04 257.92 L174.26 257.99 L174.56 258.04 L174.90 258.10 L175.19 258.19 L175.39 258.31 L175.51 258.45 L175.58 258.61 L175.63 258.77 L175.66 258.93 L175.68 259.10 L175.69 259.27 L175.70 259.43Z"/><circle cx="169.3" cy="259.6" r="1.8" fill="none" stroke="#333" stroke-width="1.05"/></svg>
<svg style="left:208px;top:254px" width="7" height="13" viewBox="0 0 7 13"><path d="M3.5 0.5 L7 5 L0 5 Z M0 8 L7 8 L3.5 12.5 Z" fill="#c0c0c0"/></svg>
<div class="t" style="left:221px;top:251px;font-size:14px;color:#222;line-height:18px;font-weight:bold">商品编码</div>
<svg style="left:370px;top:254px" width="7" height="13" viewBox="0 0 7 13"><path d="M3.5 0.5 L7 5 L0 5 Z M0 8 L7 8 L3.5 12.5 Z" fill="#c0c0c0"/></svg>
<div class="t" style="left:383px;top:251px;font-size:14px;color:#222;line-height:18px;font-weight:bold">商品</div>
<svg style="left:522px;top:254px" width="7" height="13" viewBox="0 0 7 13"><path d="M3.5 0.5 L7 5 L0 5 Z M0 8 L7 8 L3.5 12.5 Z" fill="#c0c0c0"/></svg>
<div class="t" style="left:535px;top:251px;font-size:14px;color:#222;line-height:18px;font-weight:bold">主计量单位</div>
<svg style="left:641px;top:254px" width="7" height="13" viewBox="0 0 7 13"><path d="M3.5 0.5 L7 5 L0 5 Z M0 8 L7 8 L3.5 12.5 Z" fill="#c0c0c0"/></svg>
<div class="t" style="right:1168px;top:251px;font-size:14px;color:#222;line-height:18px;font-weight:bold">造价单价</div>
<svg style="left:743px;top:254px" width="13" height="13" viewBox="0 0 13 13"><circle cx="6.5" cy="6.5" r="5.7" fill="none" stroke="#222" stroke-width="1.4"/><path d="M4.5 5.1 C4.5 3.1 8.5 3.1 8.5 5.1 C8.5 6.6 6.6 6.5 6.6 8.3" fill="none" stroke="#222" stroke-width="1.4"/><circle cx="6.6" cy="10" r="0.9" fill="#222"/></svg>
<svg style="left:782px;top:254px" width="7" height="13" viewBox="0 0 7 13"><path d="M3.5 0.5 L7 5 L0 5 Z M0 8 L7 8 L3.5 12.5 Z" fill="#c0c0c0"/></svg>
<div class="t" style="right:1024px;top:251px;font-size:14px;color:#222;line-height:18px;font-weight:bold">造价金额</div>
<svg style="left:887px;top:254px" width="13" height="13" viewBox="0 0 13 13"><circle cx="6.5" cy="6.5" r="5.7" fill="none" stroke="#222" stroke-width="1.4"/><path d="M4.5 5.1 C4.5 3.1 8.5 3.1 8.5 5.1 C8.5 6.6 6.6 6.5 6.6 8.3" fill="none" stroke="#222" stroke-width="1.4"/><circle cx="6.6" cy="10" r="0.9" fill="#222"/></svg>
<svg style="left:925px;top:254px" width="7" height="13" viewBox="0 0 7 13"><path d="M3.5 0.5 L7 5 L0 5 Z M0 8 L7 8 L3.5 12.5 Z" fill="#c0c0c0"/></svg>
<div class="t" style="left:939px;top:251px;font-size:14px;color:#222;line-height:18px;font-weight:bold">数量下浮比例...</div>
<svg style="left:1045px;top:254px" width="12" height="14" viewBox="0 0 12 14"><path d="M7 1.2 H2.2 Q1 1.2 1 2.4 V11.8 Q1 13 2.2 13 H9.3 Q10.5 13 10.5 11.8 V6.5" fill="none" stroke="#8a88fb" stroke-width="1.2"/><path d="M4.2 11 L10.4 2.4" stroke="#5262ff" stroke-width="1.7" stroke-linecap="round"/></svg>
<svg style="left:1089px;top:254px" width="7" height="13" viewBox="0 0 7 13"><path d="M3.5 0.5 L7 5 L0 5 Z M0 8 L7 8 L3.5 12.5 Z" fill="#c0c0c0"/></svg>
<div class="t" style="right:737px;top:251px;font-size:14px;color:#222;line-height:18px;font-weight:bold">预算数量</div>
<svg style="left:1174px;top:254px" width="13" height="13" viewBox="0 0 13 13"><circle cx="6.5" cy="6.5" r="5.7" fill="none" stroke="#222" stroke-width="1.4"/><path d="M4.5 5.1 C4.5 3.1 8.5 3.1 8.5 5.1 C8.5 6.6 6.6 6.5 6.6 8.3" fill="none" stroke="#222" stroke-width="1.4"/><circle cx="6.6" cy="10" r="0.9" fill="#222"/></svg>
<svg style="left:1212px;top:254px" width="7" height="13" viewBox="0 0 7 13"><path d="M3.5 0.5 L7 5 L0 5 Z M0 8 L7 8 L3.5 12.5 Z" fill="#c0c0c0"/></svg>
<div class="t" style="left:1226px;top:251px;font-size:14px;color:#222;line-height:18px;font-weight:bold">累计执行数量</div>
<svg style="left:1314px;top:254px" width="13" height="13" viewBox="0 0 13 13"><circle cx="6.5" cy="6.5" r="5.7" fill="none" stroke="#222" stroke-width="1.4"/><path d="M4.5 5.1 C4.5 3.1 8.5 3.1 8.5 5.1 C8.5 6.6 6.6 6.5 6.6 8.3" fill="none" stroke="#222" stroke-width="1.4"/><circle cx="6.6" cy="10" r="0.9" fill="#222"/></svg>
<svg style="left:1352px;top:254px" width="7" height="13" viewBox="0 0 7 13"><path d="M3.5 0.5 L7 5 L0 5 Z M0 8 L7 8 L3.5 12.5 Z" fill="#c0c0c0"/></svg>
<div class="t" style="right:348px;top:251px;font-size:14px;color:#222;line-height:18px;font-weight:bold">出库执行数量</div>
<svg style="left:1563px;top:254px" width="13" height="13" viewBox="0 0 13 13"><circle cx="6.5" cy="6.5" r="5.7" fill="none" stroke="#222" stroke-width="1.4"/><path d="M4.5 5.1 C4.5 3.1 8.5 3.1 8.5 5.1 C8.5 6.6 6.6 6.5 6.6 8.3" fill="none" stroke="#222" stroke-width="1.4"/><circle cx="6.6" cy="10" r="0.9" fill="#222"/></svg>
<svg style="left:1600px;top:254px" width="7" height="13" viewBox="0 0 7 13"><path d="M3.5 0.5 L7 5 L0 5 Z M0 8 L7 8 L3.5 12.5 Z" fill="#c0c0c0"/></svg>
<div class="t" style="right:162px;top:251px;font-size:14px;color:#222;line-height:18px;font-weight:bold">预算单价</div>
<svg style="left:1772px;top:254px" width="7" height="13" viewBox="0 0 7 13"><path d="M3.5 0.5 L7 5 L0 5 Z M0 8 L7 8 L3.5 12.5 Z" fill="#c0c0c0"/></svg>
<div class="t" style="left:145.0px;width:50px;text-align:center;top:282px;font-size:14px;color:#222;line-height:18px;">1</div>
<div class="t" style="left:145.0px;width:50px;text-align:center;top:314px;font-size:14px;color:#222;line-height:18px;">2</div>
<div class="t" style="left:145.0px;width:50px;text-align:center;top:346px;font-size:14px;color:#222;line-height:18px;">3</div>
<div class="t" style="left:145.0px;width:50px;text-align:center;top:378px;font-size:14px;color:#222;line-height:18px;">4</div>
<div class="t" style="left:145.0px;width:50px;text-align:center;top:410px;font-size:14px;color:#222;line-height:18px;">5</div>
<div class="t" style="left:145.0px;width:50px;text-align:center;top:442px;font-size:14px;color:#222;line-height:18px;">6</div>
<div class="t" style="left:145.0px;width:50px;text-align:center;top:474px;font-size:14px;color:#222;line-height:18px;">7</div>
<div class="t" style="left:145.0px;width:50px;text-align:center;top:506px;font-size:14px;color:#222;line-height:18px;">8</div>
<div class="t" style="left:145.0px;width:50px;text-align:center;top:538px;font-size:14px;color:#222;line-height:18px;">9</div>
<div class="t" style="left:145.0px;width:50px;text-align:center;top:570px;font-size:14px;color:#222;line-height:18px;">10</div>
<div class="t" style="left:145.0px;width:50px;text-align:center;top:602px;font-size:14px;color:#222;line-height:18px;">11</div>
<div class="t" style="left:145.0px;width:50px;text-align:center;top:634px;font-size:14px;color:#222;line-height:18px;">12</div>
<div class="t" style="left:145.0px;width:50px;text-align:center;top:666px;font-size:14px;color:#222;line-height:18px;">13</div>
<div class="t" style="left:145.0px;width:50px;text-align:center;top:698px;font-size:14px;color:#222;line-height:18px;">14</div>
<div class="t" style="left:145.0px;width:50px;text-align:center;top:730px;font-size:14px;color:#222;line-height:18px;">15</div>
<div class="t" style="left:145.0px;width:50px;text-align:center;top:762px;font-size:14px;color:#222;line-height:18px;">16</div>
<div class="t" style="left:146.0px;width:50px;text-align:center;top:790px;font-size:14px;color:#222;line-height:18px;">小计</div>
<div class="t" style="right:1008px;top:790px;font-size:15px;color:#222;line-height:19px;font-weight:bold">0.00</div>
<div class="t" style="right:721px;top:790px;font-size:15px;color:#222;line-height:19px;font-weight:bold">0</div>
<div class="t" style="right:581px;top:790px;font-size:15px;color:#222;line-height:19px;font-weight:bold">0</div>
<div class="t" style="right:333px;top:790px;font-size:15px;color:#222;line-height:19px;font-weight:bold">0</div>
<div class="a" style="left:1771px;top:243px;width:8px;height:572px;background:linear-gradient(to left,rgba(0,0,0,0.09),rgba(0,0,0,0))"></div>
<div class="a" style="left:1779px;top:243px;width:101px;height:586px;background:#fff"></div>
<div class="a" style="left:1780px;top:243px;width:100px;height:32px;background:#e5e9f3"></div>
<div class="a" style="left:1781px;top:306px;width:99px;height:1px;background:#dcdcdc"></div>
<div class="a" style="left:1781px;top:338px;width:99px;height:1px;background:#dcdcdc"></div>
<div class="a" style="left:1781px;top:370px;width:99px;height:1px;background:#dcdcdc"></div>
<div class="a" style="left:1781px;top:402px;width:99px;height:1px;background:#dcdcdc"></div>
<div class="a" style="left:1781px;top:434px;width:99px;height:1px;background:#dcdcdc"></div>
<div class="a" style="left:1781px;top:466px;width:99px;height:1px;background:#dcdcdc"></div>
<div class="a" style="left:1781px;top:498px;width:99px;height:1px;background:#dcdcdc"></div>
<div class="a" style="left:1781px;top:530px;width:99px;height:1px;background:#dcdcdc"></div>
<div class="a" style="left:1781px;top:562px;width:99px;height:1px;background:#dcdcdc"></div>
<div class="a" style="left:1781px;top:594px;width:99px;height:1px;background:#dcdcdc"></div>
<div class="a" style="left:1781px;top:626px;width:99px;height:1px;background:#dcdcdc"></div>
<div class="a" style="left:1781px;top:658px;width:99px;height:1px;background:#dcdcdc"></div>
<div class="a" style="left:1781px;top:690px;width:99px;height:1px;background:#dcdcdc"></div>
<div class="a" style="left:1781px;top:722px;width:99px;height:1px;background:#dcdcdc"></div>
<div class="a" style="left:1781px;top:754px;width:99px;height:1px;background:#dcdcdc"></div>
<div class="a" style="left:1780px;top:783px;width:100px;height:31px;background:#fcf0db"></div>
<div class="a" style="left:1779px;top:814px;width:101px;height:2px;background:#dcdcdc"></div>
<div class="a" style="left:1779px;top:815px;width:1px;height:14px;background:#dcdcdc"></div>
<div class="a" style="left:1879px;top:815px;width:1px;height:14px;background:#dcdcdc"></div>
<div class="a" style="left:1779px;top:829px;width:101px;height:1px;background:#dcdcdc"></div>
<div class="t" style="left:1800.0px;width:60px;text-align:center;top:250px;font-size:14px;color:#222;line-height:18px;font-weight:bold">操作</div>
<svg style="left:1825px;top:285px" width="11" height="13" viewBox="0 0 11 13"><path d="M0 3.5 H10" fill="none" stroke="#333" stroke-width="1.1"/><path d="M3.2 3.3 V2.4 Q3.2 0.6 5 0.6 Q6.8 0.6 6.8 2.4 V3.3" fill="none" stroke="#555" stroke-width="1.1"/><path d="M1 5.2 V10.3 Q1 12.4 3.1 12.4 H6.9 Q9 12.4 9 10.3 V5.2" fill="none" stroke="#777" stroke-width="1.6"/><path d="M3.5 6 V9.5 M6.5 6 V9.5" stroke="#444" stroke-width="1.1"/></svg>
<svg style="left:1825px;top:317px" width="11" height="13" viewBox="0 0 11 13"><path d="M0 3.5 H10" fill="none" stroke="#333" stroke-width="1.1"/><path d="M3.2 3.3 V2.4 Q3.2 0.6 5 0.6 Q6.8 0.6 6.8 2.4 V3.3" fill="none" stroke="#555" stroke-width="1.1"/><path d="M1 5.2 V10.3 Q1 12.4 3.1 12.4 H6.9 Q9 12.4 9 10.3 V5.2" fill="none" stroke="#777" stroke-width="1.6"/><path d="M3.5 6 V9.5 M6.5 6 V9.5" stroke="#444" stroke-width="1.1"/></svg>
<svg style="left:1825px;top:349px" width="11" height="13" viewBox="0 0 11 13"><path d="M0 3.5 H10" fill="none" stroke="#333" stroke-width="1.1"/><path d="M3.2 3.3 V2.4 Q3.2 0.6 5 0.6 Q6.8 0.6 6.8 2.4 V3.3" fill="none" stroke="#555" stroke-width="1.1"/><path d="M1 5.2 V10.3 Q1 12.4 3.1 12.4 H6.9 Q9 12.4 9 10.3 V5.2" fill="none" stroke="#777" stroke-width="1.6"/><path d="M3.5 6 V9.5 M6.5 6 V9.5" stroke="#444" stroke-width="1.1"/></svg>
<svg style="left:1825px;top:381px" width="11" height="13" viewBox="0 0 11 13"><path d="M0 3.5 H10" fill="none" stroke="#333" stroke-width="1.1"/><path d="M3.2 3.3 V2.4 Q3.2 0.6 5 0.6 Q6.8 0.6 6.8 2.4 V3.3" fill="none" stroke="#555" stroke-width="1.1"/><path d="M1 5.2 V10.3 Q1 12.4 3.1 12.4 H6.9 Q9 12.4 9 10.3 V5.2" fill="none" stroke="#777" stroke-width="1.6"/><path d="M3.5 6 V9.5 M6.5 6 V9.5" stroke="#444" stroke-width="1.1"/></svg>
<svg style="left:1825px;top:413px" width="11" height="13" viewBox="0 0 11 13"><path d="M0 3.5 H10" fill="none" stroke="#333" stroke-width="1.1"/><path d="M3.2 3.3 V2.4 Q3.2 0.6 5 0.6 Q6.8 0.6 6.8 2.4 V3.3" fill="none" stroke="#555" stroke-width="1.1"/><path d="M1 5.2 V10.3 Q1 12.4 3.1 12.4 H6.9 Q9 12.4 9 10.3 V5.2" fill="none" stroke="#777" stroke-width="1.6"/><path d="M3.5 6 V9.5 M6.5 6 V9.5" stroke="#444" stroke-width="1.1"/></svg>
<svg style="left:1825px;top:445px" width="11" height="13" viewBox="0 0 11 13"><path d="M0 3.5 H10" fill="none" stroke="#333" stroke-width="1.1"/><path d="M3.2 3.3 V2.4 Q3.2 0.6 5 0.6 Q6.8 0.6 6.8 2.4 V3.3" fill="none" stroke="#555" stroke-width="1.1"/><path d="M1 5.2 V10.3 Q1 12.4 3.1 12.4 H6.9 Q9 12.4 9 10.3 V5.2" fill="none" stroke="#777" stroke-width="1.6"/><path d="M3.5 6 V9.5 M6.5 6 V9.5" stroke="#444" stroke-width="1.1"/></svg>
<svg style="left:1825px;top:477px" width="11" height="13" viewBox="0 0 11 13"><path d="M0 3.5 H10" fill="none" stroke="#333" stroke-width="1.1"/><path d="M3.2 3.3 V2.4 Q3.2 0.6 5 0.6 Q6.8 0.6 6.8 2.4 V3.3" fill="none" stroke="#555" stroke-width="1.1"/><path d="M1 5.2 V10.3 Q1 12.4 3.1 12.4 H6.9 Q9 12.4 9 10.3 V5.2" fill="none" stroke="#777" stroke-width="1.6"/><path d="M3.5 6 V9.5 M6.5 6 V9.5" stroke="#444" stroke-width="1.1"/></svg>
<svg style="left:1825px;top:509px" width="11" height="13" viewBox="0 0 11 13"><path d="M0 3.5 H10" fill="none" stroke="#333" stroke-width="1.1"/><path d="M3.2 3.3 V2.4 Q3.2 0.6 5 0.6 Q6.8 0.6 6.8 2.4 V3.3" fill="none" stroke="#555" stroke-width="1.1"/><path d="M1 5.2 V10.3 Q1 12.4 3.1 12.4 H6.9 Q9 12.4 9 10.3 V5.2" fill="none" stroke="#777" stroke-width="1.6"/><path d="M3.5 6 V9.5 M6.5 6 V9.5" stroke="#444" stroke-width="1.1"/></svg>
<svg style="left:1825px;top:541px" width="11" height="13" viewBox="0 0 11 13"><path d="M0 3.5 H10" fill="none" stroke="#333" stroke-width="1.1"/><path d="M3.2 3.3 V2.4 Q3.2 0.6 5 0.6 Q6.8 0.6 6.8 2.4 V3.3" fill="none" stroke="#555" stroke-width="1.1"/><path d="M1 5.2 V10.3 Q1 12.4 3.1 12.4 H6.9 Q9 12.4 9 10.3 V5.2" fill="none" stroke="#777" stroke-width="1.6"/><path d="M3.5 6 V9.5 M6.5 6 V9.5" stroke="#444" stroke-width="1.1"/></svg>
<svg style="left:1825px;top:573px" width="11" height="13" viewBox="0 0 11 13"><path d="M0 3.5 H10" fill="none" stroke="#333" stroke-width="1.1"/><path d="M3.2 3.3 V2.4 Q3.2 0.6 5 0.6 Q6.8 0.6 6.8 2.4 V3.3" fill="none" stroke="#555" stroke-width="1.1"/><path d="M1 5.2 V10.3 Q1 12.4 3.1 12.4 H6.9 Q9 12.4 9 10.3 V5.2" fill="none" stroke="#777" stroke-width="1.6"/><path d="M3.5 6 V9.5 M6.5 6 V9.5" stroke="#444" stroke-width="1.1"/></svg>
<svg style="left:1825px;top:605px" width="11" height="13" viewBox="0 0 11 13"><path d="M0 3.5 H10" fill="none" stroke="#333" stroke-width="1.1"/><path d="M3.2 3.3 V2.4 Q3.2 0.6 5 0.6 Q6.8 0.6 6.8 2.4 V3.3" fill="none" stroke="#555" stroke-width="1.1"/><path d="M1 5.2 V10.3 Q1 12.4 3.1 12.4 H6.9 Q9 12.4 9 10.3 V5.2" fill="none" stroke="#777" stroke-width="1.6"/><path d="M3.5 6 V9.5 M6.5 6 V9.5" stroke="#444" stroke-width="1.1"/></svg>
<svg style="left:1825px;top:637px" width="11" height="13" viewBox="0 0 11 13"><path d="M0 3.5 H10" fill="none" stroke="#333" stroke-width="1.1"/><path d="M3.2 3.3 V2.4 Q3.2 0.6 5 0.6 Q6.8 0.6 6.8 2.4 V3.3" fill="none" stroke="#555" stroke-width="1.1"/><path d="M1 5.2 V10.3 Q1 12.4 3.1 12.4 H6.9 Q9 12.4 9 10.3 V5.2" fill="none" stroke="#777" stroke-width="1.6"/><path d="M3.5 6 V9.5 M6.5 6 V9.5" stroke="#444" stroke-width="1.1"/></svg>
<svg style="left:1825px;top:669px" width="11" height="13" viewBox="0 0 11 13"><path d="M0 3.5 H10" fill="none" stroke="#333" stroke-width="1.1"/><path d="M3.2 3.3 V2.4 Q3.2 0.6 5 0.6 Q6.8 0.6 6.8 2.4 V3.3" fill="none" stroke="#555" stroke-width="1.1"/><path d="M1 5.2 V10.3 Q1 12.4 3.1 12.4 H6.9 Q9 12.4 9 10.3 V5.2" fill="none" stroke="#777" stroke-width="1.6"/><path d="M3.5 6 V9.5 M6.5 6 V9.5" stroke="#444" stroke-width="1.1"/></svg>
<svg style="left:1825px;top:701px" width="11" height="13" viewBox="0 0 11 13"><path d="M0 3.5 H10" fill="none" stroke="#333" stroke-width="1.1"/><path d="M3.2 3.3 V2.4 Q3.2 0.6 5 0.6 Q6.8 0.6 6.8 2.4 V3.3" fill="none" stroke="#555" stroke-width="1.1"/><path d="M1 5.2 V10.3 Q1 12.4 3.1 12.4 H6.9 Q9 12.4 9 10.3 V5.2" fill="none" stroke="#777" stroke-width="1.6"/><path d="M3.5 6 V9.5 M6.5 6 V9.5" stroke="#444" stroke-width="1.1"/></svg>
<svg style="left:1825px;top:733px" width="11" height="13" viewBox="0 0 11 13"><path d="M0 3.5 H10" fill="none" stroke="#333" stroke-width="1.1"/><path d="M3.2 3.3 V2.4 Q3.2 0.6 5 0.6 Q6.8 0.6 6.8 2.4 V3.3" fill="none" stroke="#555" stroke-width="1.1"/><path d="M1 5.2 V10.3 Q1 12.4 3.1 12.4 H6.9 Q9 12.4 9 10.3 V5.2" fill="none" stroke="#777" stroke-width="1.6"/><path d="M3.5 6 V9.5 M6.5 6 V9.5" stroke="#444" stroke-width="1.1"/></svg>
<svg style="left:1825px;top:765px" width="11" height="13" viewBox="0 0 11 13"><path d="M0 3.5 H10" fill="none" stroke="#333" stroke-width="1.1"/><path d="M3.2 3.3 V2.4 Q3.2 0.6 5 0.6 Q6.8 0.6 6.8 2.4 V3.3" fill="none" stroke="#555" stroke-width="1.1"/><path d="M1 5.2 V10.3 Q1 12.4 3.1 12.4 H6.9 Q9 12.4 9 10.3 V5.2" fill="none" stroke="#777" stroke-width="1.6"/><path d="M3.5 6 V9.5 M6.5 6 V9.5" stroke="#444" stroke-width="1.1"/></svg>
<div class="a" style="left:1871px;top:277px;width:9px;height:400px;border-radius:5px;background:rgba(0,0,0,0.28)"></div>
<div class="a" style="left:1885px;top:244px;width:30px;height:36px;background:#fff;box-shadow:0 0 4px rgba(0,0,0,0.12)"></div>
<div class="a" style="left:1885px;top:283px;width:30px;height:37px;background:#fff;box-shadow:0 0 4px rgba(0,0,0,0.12)"></div>
<div class="a" style="left:1885px;top:322px;width:30px;height:38px;background:#5262ff;box-shadow:0 0 4px rgba(0,0,0,0.12)"></div>
<svg style="left:1894px;top:253px" width="18" height="19" viewBox="0 0 18 19"><rect x="0.6" y="0.6" width="17" height="17.5" rx="2.5" fill="none" stroke="#333" stroke-width="1.2"/></svg>
<div class="t" style="left:1897px;top:254px;font-size:12px;color:#222;line-height:16px;">草</div>
<svg style="left:1905px;top:267px" width="3" height="3" viewBox="0 0 3 3"><rect x="0" y="0" width="3" height="3" fill="#5262ff"/></svg>
<svg style="left:1893px;top:292px" width="18" height="20" viewBox="0 0 18 20"><path d="M15 1.6 L3.5 10.8 Q1 13 2.5 15.8 Q4.5 18.8 7.5 17 L13 12.2 Q14.5 10.5 13.2 9.2 Q11.8 7.8 10 9.2 L5.6 13.6" fill="none" stroke="#222" stroke-width="1.2" stroke-linecap="round"/></svg>
<svg style="left:1893px;top:332px" width="20" height="21" viewBox="0 0 20 21"><rect x="0.7" y="0.7" width="19" height="19" rx="2" fill="none" stroke="#fff" stroke-width="1.4"/><path d="M4 16 L8.5 11.5 M4 16 V11.8 M4 16 H8.2 M16 4 L11.5 8.5 M16 4 H11.8 M16 4 V8.2" fill="none" stroke="#fff" stroke-width="1.3"/></svg>
<div class="a" style="left:124px;top:913px;width:1776px;height:48px;background:#fff;box-shadow:0 0 4px rgba(0,0,0,0.10)"></div>
<div class="a" style="left:1429px;top:921px;width:82px;height:36px;border-radius:3px;border:1px solid #c8c8c8;color:#222;background:#fff;font-size:16px;line-height:34px;text-align:center;white-space:nowrap">放弃</div>
<div class="a" style="left:1523px;top:921px;width:130px;height:36px;border-radius:3px;border:1px solid #5262ff;color:#5262ff;background:#fff;font-size:16px;line-height:34px;text-align:center;white-space:nowrap">另存为模板</div>
<div class="a" style="left:1665px;top:921px;width:114px;height:36px;border-radius:3px;border:1px solid #5262ff;color:#5262ff;background:#fff;font-size:16px;line-height:34px;text-align:center;white-space:nowrap">保存草稿</div>
<div class="a" style="left:1791px;top:921px;width:87px;height:36px;border-radius:3px;border:1px solid #5262ff;color:#fff;background:#5262ff;font-size:16px;line-height:34px;text-align:center;white-space:nowrap">保&nbsp;存</div>
</body>
</html>
